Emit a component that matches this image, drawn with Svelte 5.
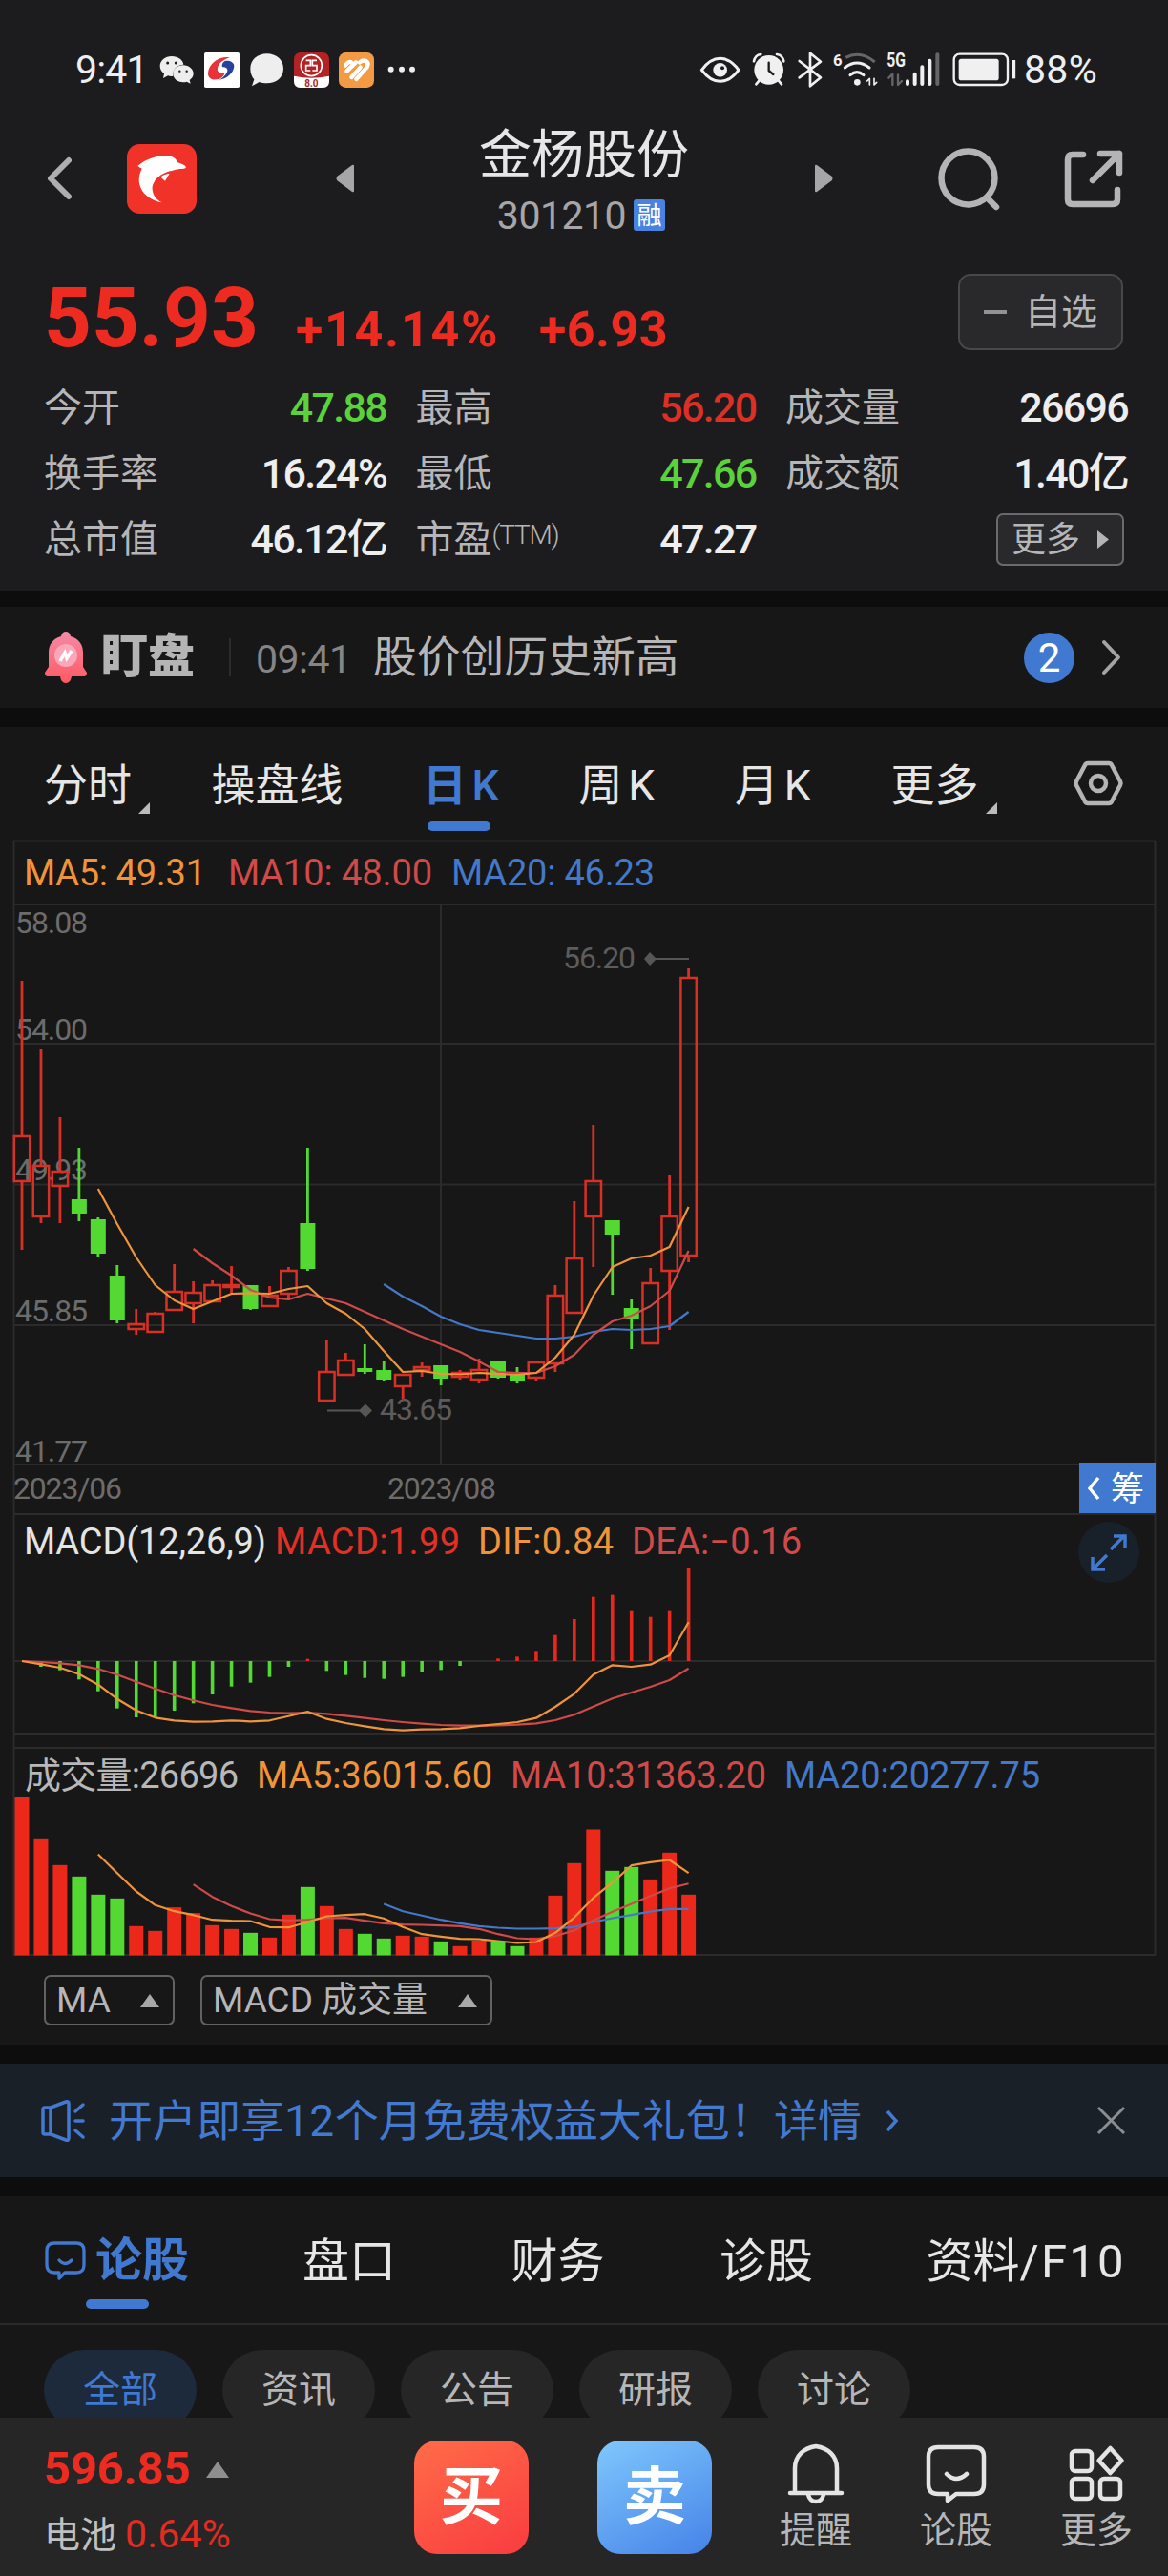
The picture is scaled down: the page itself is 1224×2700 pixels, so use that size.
<script lang="ts">
  const stats = [
    { label: '今开', value: '47.88', tone: 'down' },
    { label: '最高', value: '56.20', tone: 'up' },
    { label: '成交量', value: '26696', tone: '' },
    { label: '换手率', value: '16.24%', tone: '' },
    { label: '最低', value: '47.66', tone: 'down' },
    { label: '成交额', value: '1.40亿', tone: '' },
    { label: '总市值', value: '46.12亿', tone: '' },
    { label: '市盈', sup: '(TTM)', value: '47.27', tone: '' }
  ];

  const periods = [
    { name: '分时', corner: true },
    { name: '操盘线' },
    { name: '日', k: true, active: true },
    { name: '周', k: true },
    { name: '月', k: true },
    { name: '更多', corner: true }
  ];

  const pills = ['全部', '资讯', '公告', '研报', '讨论'];

  // [direction, high, body top, body bottom, low]
  const candles: [string, number, number, number, number][] = [
    ['r', 1028, 1190, 1239, 1310],
    ['r', 1099, 1221, 1276, 1282],
    ['r', 1171, 1227, 1244, 1282],
    ['g', 1203, 1257, 1272, 1280],
    ['g', 1276, 1278, 1314, 1318],
    ['g', 1326, 1337, 1384, 1387],
    ['r', 1372, 1387, 1394, 1399],
    ['r', 1375, 1376, 1397, 1397],
    ['r', 1325, 1353, 1374, 1374],
    ['r', 1343, 1354, 1367, 1387],
    ['r', 1342, 1346, 1365, 1365],
    ['r', 1327, 1346, 1350, 1355],
    ['g', 1347, 1347, 1372, 1373],
    ['r', 1348, 1357, 1370, 1370],
    ['r', 1328, 1331, 1357, 1360],
    ['g', 1203, 1282, 1330, 1332],
    ['r', 1405, 1437, 1469, 1469],
    ['r', 1418, 1425, 1442, 1442],
    ['g', 1409, 1434, 1438, 1440],
    ['g', 1426, 1436, 1446, 1447],
    ['r', 1440, 1440, 1454, 1466],
    ['r', 1428, 1432, 1437, 1443],
    ['g', 1431, 1431, 1445, 1452],
    ['r', 1436, 1438, 1444, 1446],
    ['r', 1424, 1435, 1447, 1450],
    ['g', 1427, 1427, 1444, 1445],
    ['g', 1433, 1441, 1447, 1450],
    ['r', 1427, 1427, 1445, 1447],
    ['r', 1347, 1357, 1430, 1438],
    ['r', 1259, 1318, 1377, 1377],
    ['r', 1179, 1237, 1276, 1328],
    ['g', 1279, 1279, 1294, 1357],
    ['g', 1362, 1371, 1383, 1414],
    ['r', 1329, 1344, 1409, 1409],
    ['r', 1232, 1274, 1333, 1394],
    ['r', 1015, 1024, 1317, 1323]
  ];

  const ma5 = [1246, 1283, 1318, 1347, 1363, 1372, 1364, 1356, 1355.5, 1356, 1351, 1348, 1366, 1377, 1393, 1416, 1438, 1437, 1440, 1440.5, 1439, 1440, 1441, 1439, 1423, 1399, 1358, 1328, 1319, 1316, 1307, 1265];
  const ma10 = [1309, 1324, 1337, 1352, 1360, 1362, 1356, 1361, 1366, 1375, 1384, 1393, 1401, 1409, 1417, 1427, 1438, 1439, 1439, 1432, 1420, 1399, 1385, 1379, 1369, 1353, 1311];
  const ma20 = [1346, 1359, 1369, 1380, 1388, 1394, 1397, 1400, 1403, 1403, 1401, 1396, 1393, 1394, 1393, 1390, 1375];

  const macd = [0, 18, 29, 58, 95, 149, 177, 177, 156, 133, 105, 80, 68, 50, 18, -7, 31, 44, 53, 56, 50, 36, 28, 15, 0, -8, -14, -32, -82, -132, -202, -208, -157, -139, -157, -293];
  const dif = [0, 10, 21, 41, 74, 119, 155, 178, 187, 191, 190, 187, 190, 187, 173, 159, 182, 195, 205, 214, 218, 215, 214, 211, 204, 198, 192, 179, 144, 103, 43, 13, 18, 11, -18, -122];
  const dea = [0, 3, 7, 13, 25, 43, 65, 87, 107, 124, 138, 148, 157, 162, 164, 162, 166, 172, 179, 186, 192, 197, 201, 203, 203, 202, 200, 196, 186, 169, 143, 118, 99, 81, 60, 23];

  const volumes: [string, number][] = [
    ['r', 497], ['r', 368], ['r', 284], ['g', 248], ['g', 191], ['g', 179], ['r', 92], ['r', 77], ['r', 151],
    ['r', 133], ['r', 95], ['r', 83], ['g', 71], ['r', 56], ['r', 128], ['g', 215], ['r', 155], ['r', 83],
    ['g', 68], ['g', 53], ['r', 62], ['r', 59], ['g', 44], ['r', 29], ['r', 47], ['g', 41], ['g', 29],
    ['r', 56], ['r', 188], ['r', 290], ['r', 396], ['g', 266], ['g', 278], ['r', 239], ['r', 323], ['r', 191]
  ];
  const vol5 = [318, 259, 201, 158, 139, 127, 112, 109, 108, 89, 88, 105, 123, 127, 130, 116, 89, 67, 59, 52, 51, 45, 39, 42, 71, 119, 181, 229, 283, 293, 300, 259];
  const vol10 = [223, 184, 155, 132, 114, 110, 112, 117, 118, 109, 101, 97, 96, 94, 92, 83, 67, 54, 51, 61, 79, 110, 137, 162, 187, 211, 226];
  const vol20 = [162, 139, 125, 112, 101, 92, 87, 84, 84, 85, 89, 105, 117, 127, 138, 146, 146];

  const cx = (i: number) => 23 + i * 19.96;

  function line(values: number[], start: number, y: (v: number) => number = (v) => v) {
    return values.map((v, i) => `${cx(i + start).toFixed(1)},${y(v).toFixed(1)}`).join(' ');
  }

  const macdY = (v: number) => 1741 + v / 3;
  const volY = (v: number) => 2049.5 - v / 3;
  const color = (d: string) => (d === 'r' ? '#d93026' : '#53d932');
</script>

<div class="page">
  <header>
    <div class="status">
      <span class="time">9:41</span>
      <div class="apps">
        <svg viewBox="385 42 111 111">
          <path fill="#eee" d="M424 54c-21 0-37 14-37 31 0 10 5 18 13 24l-3 14 15-8c6 2 11 2 16 1-3-20 13-36 33-36-2-15-17-26-37-26z" />
          <path fill="#eee" d="M460 82c-18 0-32 12-32 27s14 27 32 27c4 0 8-1 11-2l12 6-3-11c7-5 12-12 12-20 0-15-14-27-32-27z" />
          <g fill="#1c1c1e"><circle cx="411" cy="75" r="4.5" /><circle cx="437" cy="75" r="4.5" /><circle cx="449" cy="101" r="3.5" /><circle cx="471" cy="101" r="3.5" /></g>
        </svg>
        <svg viewBox="525 42 111 111">
          <rect x="525" y="42" width="111" height="111" rx="5" fill="#fff" />
          <path fill="#e8333a" d="M606 58c-34-5-68 19-69 50 0 14 12 22 27 19 15-2 24-12 25-20-14 2-24-4-22-15 2-15 18-28 39-34z" />
          <path fill="#26429a" d="M590 69c14-3 28 3 29 15 0 21-22 41-47 44 17-9 27-23 26-32-2-7-8-9-16-8-3-8 1-15 8-19z" />
        </svg>
        <svg viewBox="666 42 111 111">
          <path fill="#eee" d="M722 46c-29 0-52 19-52 47 0 15 5 26 12 34l-7 21 23-13c8 3 16 4 24 4 29 0 52-18 52-46s-23-47-52-47z" />
        </svg>
        <svg viewBox="807 42 111 111">
          <rect x="807" y="42" width="111" height="111" rx="20" fill="#b32224" />
          <path fill="#fff" d="M807 116q55 12 111 0v17q0 20-20 20h-71q-20 0-20-20z" />
          <circle cx="862" cy="83" r="33" fill="none" stroke="#fff" stroke-width="5" />
          <path fill="none" stroke="#fff" stroke-width="5" d="M845 67h14v16h-14v16h14M879 67h-14v16h14v16h-14" />
          <text x="862" y="149" text-anchor="middle" font-size="30" font-weight="700" fill="#b32224">8.0</text>
        </svg>
        <svg viewBox="948 42 111 111">
          <rect x="948" y="42" width="111" height="111" rx="22" fill="#f39a45" />
          <path fill="none" stroke="#fff" stroke-width="13" stroke-linecap="round" stroke-linejoin="round" d="M969 83l7-8q6-5 11-2M973 101l29-28M988 120l28-31M1003 126l34-38q7-13-4-19-9-4-19 4" />
        </svg>
        <svg viewBox="1092 42 111 111" fill="#eee"><circle cx="1115" cy="95" r="9" /><circle cx="1149" cy="95" r="9" /><circle cx="1182" cy="95" r="9" /></svg>
      </div>
      <svg class="system" viewBox="40 36 996 120" fill="none" stroke="#f0f0f0" stroke-linecap="round" stroke-linejoin="round">
        <path stroke-width="9" d="M47 97c18-24 36-36 58-36s40 12 58 36c-18 24-36 36-58 36s-40-12-58-36z" />
        <circle cx="105" cy="97" r="22" fill="#f0f0f0" stroke="none" />
        <circle cx="112" cy="91" r="6" fill="#1c1c1e" stroke="none" />
        <circle cx="258" cy="97" r="46" fill="#f0f0f0" stroke="none" />
        <path stroke-width="8" d="M211 70q4-20 22-22M305 70q-4-20-22-22M228 130l-10 12M288 130l10 12" />
        <path stroke="#1c1c1e" stroke-width="7" d="M258 74v25l14 12" />
        <path stroke-width="8" d="M354 69l67 52-33 27V44l33 27-67 50" />
        <text x="460" y="84" font-size="50" font-weight="700" fill="#f0f0f0" stroke="none">6</text>
        <path stroke="#666" stroke-width="9" d="M500 58q46-24 91 14" stroke-linecap="butt" />
        <path stroke-width="9" d="M497 90q38-30 77 0M514 113q21-18 42 0" />
        <circle cx="536" cy="136" r="10" fill="#f0f0f0" stroke="none" />
        <path stroke-width="5" d="M567 132l8-8v20M589 144v-20M589 144l8-8" />
        <text x="629" y="86" font-size="58" font-weight="700" fill="#f0f0f0" stroke="none" textLength="59" lengthAdjust="spacingAndGlyphs">5G</text>
        <path stroke="#666" stroke-width="7" d="M635 122l12-12v34M664 112v32l12-12" />
        <path stroke-width="12" d="M694 133v8M717 110v31M740 88v53M764 68v73" />
        <path stroke="#666" stroke-width="12" d="M788 49v92" />
        <rect x="840" y="47" width="169" height="97" rx="18" stroke-width="7" />
        <rect x="855" y="62" width="126" height="68" rx="8" fill="#f0f0f0" stroke="none" />
        <path stroke-width="11" stroke-linecap="butt" d="M1028 66v58" />
      </svg>
      <span class="battery">88%</span>
    </div>

    <nav>
      <svg class="back" viewBox="0 0 25 44"><path d="M22 3L3 22l19 19" fill="none" stroke="#aeaeb0" stroke-width="6" stroke-linecap="round" stroke-linejoin="round" /></svg>
      <svg class="logo" viewBox="0 0 219 219">
        <rect width="219" height="219" rx="40" fill="#f13229" />
        <path fill="#fff" d="M34 69C62 44 108 31 138 38c11 3 17 10 22 20 11 4 22 7 25 13 2 6-8 7-19 7-11 2-20 4-29 7-11 3-19 6-24 12l21-5-14 24-16-14c-18 12-26 26-24 42 2 17 12 31 30 40-24-4-50-18-62-38-14-24-12-47-1-69-4-3-9-4-13-8z" />
        <path stroke="#f13229" stroke-width="4" fill="none" d="M137 87q-33 8-48 30" />
      </svg>
      <svg class="step" viewBox="0 0 19 30"><path d="M19 2v26q0 2-2 1L1 17q-1-2 0-4L17 1q2-1 2 1z" fill="#a6a6a8" /></svg>
      <div class="name">
        <h1>金杨股份</h1>
        <p>301210<i>融</i></p>
      </div>
      <svg class="step next" viewBox="0 0 19 30"><path d="M0 2v26q0 2 2 1l16-12q1-2 0-4L2 1Q0 0 0 2z" fill="#a6a6a8" /></svg>
      <svg class="search" viewBox="0 0 65 65" fill="none" stroke="#b4b4b6" stroke-width="6.5" stroke-linecap="round"><circle cx="31.500" cy="31.500" r="28" /><path d="M52 53l9 9" /></svg>
      <svg class="share" viewBox="0 0 61 61" fill="none" stroke="#b4b4b6" stroke-width="6.5" stroke-linecap="round" stroke-linejoin="round"><path d="M20 5H9q-5 0-5 5v42q0 5 5 5h42q5 0 5-5V42M38 4h20v20M58 4L30 32" /></svg>
    </nav>

    <div class="quote">
      <div class="prices">
        <strong>55.93</strong>
        <b>+14.14%</b>
        <b class="diff">+6.93</b>
      </div>
      <button class="watch"><span></span>自选</button>
    </div>

    <div class="stats">
      {#each stats as s}
        <div class="stat">
          <span>{s.label}{#if s.sup}<small>{s.sup}</small>{/if}</span>
          <b class={s.tone}>{s.value}</b>
        </div>
      {/each}
      <div class="stat last">
        <button class="more">更多<svg viewBox="0 0 12 19"><path d="M0 0l12 9.500L0 19z" fill="#b4b4b6" /></svg></button>
      </div>
    </div>
  </header>

  <section class="alert">
    <svg class="bell" viewBox="0 0 44 54">
      <defs>
        <linearGradient id="bell" x1="0" y1="0" x2="0" y2="1"><stop offset="0" stop-color="#f58aa6" /><stop offset="1" stop-color="#ff5964" /></linearGradient>
      </defs>
      <path fill="url(#bell)" d="M22 0q4 0 5 5c8 2 13 8 13 17v15l4 6q0 4-3 4H28q-1 7-6 7t-6-7H3q-3 0-3-4l4-6V22C4 13 9 7 17 5q1-5 5-5z" />
      <circle cx="22" cy="25" r="12" fill="#f9a7b9" />
      <path d="M16 31l5-9 2 6 5-8" fill="none" stroke="#fff" stroke-width="3.500" />
    </svg>
    <strong>盯盘</strong>
    <i></i>
    <time>09:41</time>
    <p>股价创历史新高</p>
    <em>2</em>
    <svg class="go" viewBox="0 0 20 36"><path d="M2 2l15 16L2 34" fill="none" stroke="#a4a4a4" stroke-width="4" stroke-linecap="round" stroke-linejoin="round" /></svg>
  </section>

  <section class="chart">
    <div class="periods">
      {#each periods as p}
        <div class="period" class:active={p.active} class:corner={p.corner}>{p.name}{#if p.k}<span>K</span>{/if}</div>
      {/each}
      <svg class="gear" viewBox="0 0 52 48" fill="none" stroke="#b4b4b4" stroke-width="4.500" stroke-linejoin="round"><path d="M15 3h22q2 0 3 2l9 17q1 2 0 4l-9 17q-1 2-3 2H15q-2 0-3-2L3 26q-1-2 0-4l9-17q1-2 3-2z" /><circle cx="26" cy="24" r="8" /></svg>
    </div>

    <svg class="plot" viewBox="0 880 1224 1170">
      <g class="grid">
        <path d="M14 881.500H1211M14 948H1211M14 1094H1211M14 1241.500H1211M14 1389H1211M14 1535H1211M14 1587H1211M14 1741H1211M14 1817H1211M14 1832H1211M14 2049H1211M14.500 881V2049M1210.500 881V2049M462 948V1535" />
      </g>

      <g class="axis">
        <text x="16" y="978" textLength="76">58.08</text>
        <text x="16" y="1090" textLength="76">54.00</text>
        <text x="16" y="1237" textLength="76">49.93</text>
        <text x="16" y="1385" textLength="76">45.85</text>
        <text x="16" y="1532" textLength="76">41.77</text>
        <text x="14" y="1571" textLength="114">2023/06</text>
        <text x="406" y="1571" textLength="114">2023/08</text>
      </g>

      <g class="legend">
        <text x="25" y="928" textLength="191" fill="#f0943a">MA5: 49.31</text>
        <text x="239" y="928" textLength="214" fill="#cf4a48">MA10: 48.00</text>
        <text x="473" y="928" textLength="213" fill="#4478c8">MA20: 46.23</text>
        <text x="25" y="1629" textLength="254" fill="#e4e4e4">MACD(12,26,9)</text>
        <text x="288" y="1629" textLength="194" fill="#e23026">MACD:1.99</text>
        <text x="501" y="1629" textLength="142" fill="#f0943a">DIF:0.84</text>
        <text x="662" y="1629" textLength="178" fill="#cf4a48">DEA:−0.16</text>
        <text x="26" y="1874" textLength="224" fill="#b8b8b8">成交量:26696</text>
        <text x="269" y="1874" textLength="247" fill="#f0943a">MA5:36015.60</text>
        <text x="535" y="1874" textLength="268" fill="#cf4a48">MA10:31363.20</text>
        <text x="822" y="1874" textLength="268" fill="#4478c8">MA20:20277.75</text>
      </g>

      {#each candles as [d, high, top, bottom, low], i}
        <path d="M{cx(i)} {high}V{top}M{cx(i)} {bottom}V{low}" stroke={color(d)} stroke-width="2.800" />
        {#if d === 'r'}
          <rect x={cx(i) - 8.2} y={top + 1} width="16.400" height={bottom - top - 2} fill="none" stroke={color(d)} stroke-width="2.500" />
        {:else}
          <rect x={cx(i) - 8} y={top} width="16" height={bottom - top} fill={color(d)} />
        {/if}
      {/each}
      <g class="lines">
        <polyline points={line(ma20, 19)} stroke="#4478c8" />
        <polyline points={line(ma10, 9)} stroke="#cf4a48" />
        <polyline points={line(ma5, 4)} stroke="#f0943a" />
      </g>

      <g class="marks">
        <path d="M681 1005H722M343 1478.500H383" />
        <path d="M675 1005l6-7 7 7-7 7zM376 1478.500l7-7 7 7-7 7z" class="diamond" />
        <text x="590" y="1015" textLength="76">56.20</text>
        <text x="398" y="1488" textLength="76">43.65</text>
      </g>

      {#each macd as v, i}
        <path d="M{cx(i)} 1741V{macdY(v)}" stroke={v < 0 ? '#e8281c' : '#53d932'} stroke-width="3.600" />
      {/each}
      <g class="lines">
        <polyline points={line(dea, 0, macdY)} stroke="#cf4a48" />
        <polyline points={line(dif, 0, macdY)} stroke="#f0943a" />
      </g>

      {#each volumes as [d, v], i}
        <rect x={cx(i) - 7.5} y={volY(v)} width="15" height={v / 3} fill={d === 'r' ? '#ec281b' : '#53d932'} />
      {/each}
      <g class="lines">
        <polyline points={line(vol20, 19, volY)} stroke="#4478c8" />
        <polyline points={line(vol10, 9, volY)} stroke="#cf4a48" />
        <polyline points={line(vol5, 4, volY)} stroke="#f0943a" />
      </g>

      <rect x="1131" y="1533" width="80" height="53" fill="#4079cf" />
      <path d="M1151 1549l-9 11 9 11" fill="none" stroke="#fff" stroke-width="3.500" />
      <text x="1164" y="1573" font-size="35" fill="#fff">筹</text>

      <circle cx="1162" cy="1627" r="32" fill="#18202a" />
      <path d="M1164 1624l15-15M1167 1610h12v13M1160 1630l-15 15M1145 1632v13h13" fill="none" stroke="#4079cf" stroke-width="3.500" />
    </svg>

    <div class="indicators">
      <button>MA<svg viewBox="0 0 20 14"><path d="M10 0l10 14H0z" /></svg></button>
      <button class="wide">MACD 成交量<svg viewBox="0 0 20 14"><path d="M10 0l10 14H0z" /></svg></button>
    </div>
  </section>

  <section class="banner">
    <svg class="horn" viewBox="0 0 46 44" fill="none" stroke="#4479d0" stroke-width="3.500" stroke-linecap="round" stroke-linejoin="round"><path d="M10 8H4q-2 0-2 2v24q0 2 2 2h6M10 8v28M10 8l16-6q3-1 3 2v36q0 3-3 2l-16-6M36 12l8-7M36 22h8M36 32l8 7" /></svg>
    <p>开户即享<span>12</span>个月免费权益大礼包！</p>
    <a href="#detail">详情</a>
    <svg class="arrow" viewBox="0 0 14 24"><path d="M2 2l9 10-9 10" fill="none" stroke="#4479d0" stroke-width="3.500" /></svg>
    <svg class="close" viewBox="0 0 31 31"><path d="M2 2l27 27M29 2L2 29" fill="none" stroke="#8b8d90" stroke-width="3" /></svg>
  </section>

  <section class="tabs">
    <div class="tab active">
      <svg viewBox="0 0 43 41" fill="none" stroke="#4079cf" stroke-width="3.300" stroke-linejoin="round" stroke-linecap="round"><path d="M10 2h23q8 0 8 8v15q0 8-8 8H21l-6 6v-6h-5q-8 0-8-8V10q0-8 8-8zM15 20q6 7 13 0" /></svg>论股
    </div>
    <div class="tab">盘口</div>
    <div class="tab">财务</div>
    <div class="tab">诊股</div>
    <div class="tab info">资料<span>/F10</span></div>
  </section>

  <div class="pills">
    {#each pills as pill, i}
      <span class:on={i === 0}>{pill}</span>
    {/each}
  </div>

  <footer>
    <div class="index">
      <strong>596.85<svg viewBox="0 0 24 17"><path d="M12 0l12 17H0z" fill="#8f8f8f" /></svg></strong>
      <p>电池<span>0.64%</span></p>
    </div>
    <button class="buy">买</button>
    <button class="sell">卖</button>
    <div class="tool">
      <svg viewBox="0 0 60 64" fill="none" stroke="#e4e4e4" stroke-width="4.500" stroke-linecap="round" stroke-linejoin="round"><path d="M3 53h54M8 53V27C8 14 17 6 30 4c13 2 22 10 22 23v26M22 55q2 7 8 7t8-7" /></svg>
      提醒
    </div>
    <div class="tool">
      <svg viewBox="0 0 64 64" fill="none" stroke="#e4e4e4" stroke-width="4.500" stroke-linecap="round" stroke-linejoin="round"><path d="M13 5h38q10 0 10 10v29q0 10-10 10H32l-9 7v-7H13Q3 54 3 44V15Q3 5 13 5zM22 33q10 10 21 0" /></svg>
      论股
    </div>
    <div class="tool">
      <svg viewBox="0 0 60 64" fill="none" stroke="#e4e4e4" stroke-width="4.500" stroke-linejoin="round"><rect x="4" y="9" width="21" height="21" rx="4" /><rect x="4" y="38" width="21" height="21" rx="4" /><rect x="34" y="38" width="21" height="21" rx="4" /><path d="M44.500 6l12 13-12 13-12-13z" /></svg>
      更多
    </div>
  </footer>
</div>

<style>
  :global(body) {
    background: #0d0d0d;
  }
  .page {
    width: 1224px;
    height: 2700px;
    overflow: hidden;
    background: #0d0d0d;
    color: #b6b6b8;
    font-family: Roboto, 'Noto Sans CJK SC', sans-serif;
  }
  h1, p {
    margin: 0;
    font-weight: 400;
  }
  i, em {
    font-style: normal;
  }
  button {
    font-family: inherit;
    padding: 0;
    color: #b6b6b8;
  }
  svg {
    display: block;
    flex: none;
    overflow: visible;
  }
  header {
    height: 619px;
    background: #1c1c1e;
  }
  .status {
    display: flex;
    align-items: center;
    height: 110px;
    padding: 36px 0 0 79px;
    box-sizing: border-box;
    line-height: 74px;
    color: #eee;
  }
  .time {
    width: 88px;
    font-size: 41px;
    letter-spacing: -0.8px;
  }
  .apps {
    display: flex;
    gap: 10px;
  }
  .apps svg {
    width: 37px;
    height: 37px;
  }
  .system {
    width: 332px;
    height: 40px;
    margin-left: 294px;
  }
  .battery {
    margin-left: 8px;
    font-size: 41px;
    letter-spacing: 0.3px;
  }
  nav {
    display: flex;
    align-items: center;
    height: 154px;
  }
  .back {
    width: 25px;
    height: 44px;
    margin-left: 50px;
  }
  .logo {
    width: 73px;
    height: 73px;
    margin-left: 58px;
  }
  .step {
    width: 19px;
    height: 30px;
    margin-left: 146px;
  }
  .step.next {
    margin-left: 132px;
  }
  .name {
    width: 220px;
    margin-left: 131px;
    padding-top: 3px;
    text-align: center;
  }
  h1 {
    font-size: 55px;
    line-height: 60px;
    color: #e6e6e6;
    white-space: nowrap;
  }
  .name p {
    display: flex;
    justify-content: center;
    align-items: center;
    gap: 8px;
    margin-top: 14px;
    margin-right: 6px;
    font-size: 41px;
    line-height: 40px;
    letter-spacing: -0.5px;
    color: #a6a6a8;
  }
  .name i {
    width: 33px;
    height: 33px;
    border-radius: 3px;
    background: #4a82e0;
    color: #fff;
    font-size: 26px;
    line-height: 34px;
    letter-spacing: 0;
  }
  .search {
    width: 65px;
    height: 65px;
    margin-left: 110px;
  }
  .share {
    width: 61px;
    height: 61px;
    margin-left: 67px;
  }
  .quote {
    display: flex;
    justify-content: space-between;
    align-items: center;
    height: 80px;
    margin: 23px 47px 0 46px;
  }
  .prices {
    display: flex;
    align-items: baseline;
    padding-top: 12px;
    color: #ee2b20;
  }
  .prices strong {
    width: 264px;
    font-size: 87px;
    line-height: 90px;
    letter-spacing: 0;
  }
  .prices b {
    width: 255px;
    font-size: 52px;
    letter-spacing: 1.7px;
  }
  .prices .diff {
    width: auto;
    letter-spacing: 0.4px;
  }
  .watch {
    display: flex;
    align-items: center;
    justify-content: center;
    gap: 19px;
    width: 173px;
    height: 80px;
    border: 2px solid #48484a;
    border-radius: 13px;
    background: #29292b;
    font-size: 38px;
    line-height: 74px;
  }
  .watch span {
    width: 24px;
    height: 4px;
    background: #929294;
  }
  .stats {
    display: grid;
    grid-template-columns: 359px 357px 359px;
    column-gap: 30.500px;
    margin: 26px 0 0 46px;
  }
  .stat {
    display: flex;
    justify-content: space-between;
    height: 69px;
    font-size: 40px;
    line-height: 69px;
  }
  .stat small {
    font-size: 28px;
    font-weight: 300;
    vertical-align: 9px;
    line-height: 30px;
    letter-spacing: -1.2px;
  }
  .stat b {
    font-size: 43px;
    font-weight: 500;
    letter-spacing: -1.7px;
    color: #eee;
  }
  .stat .up {
    color: #dc3027;
  }
  .stat .down {
    color: #5bd23c;
  }
  .stat.last {
    justify-content: flex-end;
    align-items: center;
    padding-right: 4px;
  }
  .more {
    display: flex;
    align-items: center;
    justify-content: center;
    gap: 18px;
    width: 134px;
    height: 55px;
    border: 2px solid #6a6a6c;
    border-radius: 7px;
    background: #29292b;
    font-size: 36px;
    line-height: 50px;
  }
  .more svg {
    width: 12px;
    height: 19px;
  }
  .alert {
    display: flex;
    align-items: center;
    height: 106px;
    margin-top: 17px;
    background: #171717;
    line-height: 60px;
  }
  .bell {
    width: 44px;
    height: 54px;
    margin-left: 47px;
  }
  .alert strong {
    width: 98px;
    margin-left: 15px;
    font-size: 49px;
    font-weight: 900;
    color: #b4b4b4;
  }
  .alert i {
    width: 2px;
    height: 40px;
    margin-left: 36px;
    background: #2c2c2c;
  }
  time {
    width: 96px;
    margin: 4px 0 0 26px;
    font-size: 41px;
    letter-spacing: -0.5px;
    color: #858585;
  }
  .alert p {
    margin-left: 27px;
    font-size: 45.800px;
    padding-top: 2px;
  }
  .alert em {
    width: 53px;
    height: 53px;
    margin-left: auto;
    border-radius: 50%;
    background: #4079cf;
    color: #fff;
    font-size: 42px;
    line-height: 54px;
    text-align: center;
  }
  .go {
    width: 20px;
    height: 36px;
    margin: 0 49px 0 29px;
  }
  .chart {
    height: 1381px;
    margin-top: 20px;
    background: #171717;
  }
  .periods {
    display: flex;
    gap: 83.500px;
    height: 118px;
    padding-left: 46px;
    font-size: 46px;
    line-height: 122px;
    color: #e6e6e6;
  }
  .period {
    position: relative;
    white-space: nowrap;
  }
  .period span {
    display: inline-block;
    width: 34px;
    text-align: right;
    font-size: 45px;
  }
  .period.active {
    color: #4079cf;
    font-weight: 700;
  }
  .period.active span {
    font-weight: 500;
  }
  .period.active::after {
    content: '';
    position: absolute;
    left: 5px;
    bottom: 9px;
    width: 66px;
    height: 10px;
    border-radius: 5px;
    background: #4079cf;
  }
  .period.corner::after {
    content: '';
    position: absolute;
    right: -19px;
    bottom: 27px;
    border: 6.500px solid;
    border-color: transparent #bbb #bbb transparent;
  }
  .gear {
    width: 52px;
    height: 48px;
    margin: 35px 0 0 16px;
  }
  .plot {
    width: 1224px;
    height: 1170px;
  }
  .grid path {
    stroke: #2b2b2b;
    stroke-width: 2;
  }
  .axis text, .marks text {
    font-size: 32px;
    fill: #6c6c6c;
  }
  .marks text {
    fill: #5c5c5c;
  }
  .marks path {
    stroke: #565656;
    stroke-width: 2;
  }
  .marks .diamond {
    fill: #565656;
    stroke: none;
  }
  .legend text {
    font-size: 38px;
    white-space: pre;
  }
  .lines polyline {
    fill: none;
    stroke-width: 2.200;
    stroke-linejoin: round;
  }
  .indicators {
    display: flex;
    gap: 27px;
    padding: 20px 0 0 46px;
  }
  .indicators button {
    display: flex;
    align-items: center;
    justify-content: space-between;
    width: 137px;
    height: 53px;
    padding: 0 14px 0 11px;
    border: 2px solid #626262;
    border-radius: 7px;
    background: none;
    font-size: 37px;
    line-height: 49px;
    white-space: nowrap;
  }
  .indicators .wide {
    width: 306px;
  }
  .indicators svg {
    width: 20px;
    height: 14px;
    fill: #a8a8a8;
  }
  .banner {
    display: flex;
    align-items: center;
    height: 119px;
    margin-top: 20px;
    background: #1a2028;
    color: #4479d0;
    font-size: 46px;
    line-height: 60px;
  }
  .horn {
    width: 46px;
    height: 44px;
    margin-left: 43px;
  }
  .banner p {
    width: 697px;
    margin-left: 25px;
    white-space: nowrap;
    overflow: hidden;
  }
  .banner p span {
    letter-spacing: 0.5px;
  }
  .banner a {
    color: inherit;
    text-decoration: none;
  }
  .arrow {
    width: 14px;
    height: 24px;
    margin-left: 25px;
  }
  .close {
    width: 31px;
    height: 31px;
    margin: 0 44px 0 auto;
  }
  .tabs {
    display: flex;
    height: 135px;
    margin-top: 20px;
    padding-left: 47px;
    box-sizing: border-box;
    border-bottom: 2px solid #2a2a2a;
    background: #171717;
    color: #e6e6e6;
    font-size: 49px;
    line-height: 138px;
    white-space: nowrap;
  }
  .tab {
    width: 218.500px;
  }
  .tab.active {
    position: relative;
    display: flex;
    align-items: center;
    gap: 10px;
    width: 270px;
    height: 135px;
    color: #4079cf;
    font-weight: 700;
  }
  .tab.active svg {
    width: 43px;
    height: 41px;
  }
  .tab.active::after {
    content: '';
    position: absolute;
    left: 43px;
    bottom: 17px;
    width: 66px;
    height: 10px;
    border-radius: 5px;
    background: #4079cf;
  }
  .tab.info {
    margin-left: -2px;
  }
  .tab.info span {
    letter-spacing: 2.200px;
  }
  .pills {
    display: flex;
    gap: 27px;
    height: 97px;
    padding: 26px 0 0 46px;
    box-sizing: border-box;
    overflow: hidden;
    background: #171717;
  }
  .pills span {
    width: 160px;
    height: 84px;
    border-radius: 42px;
    background: #262626;
    font-size: 39px;
    line-height: 84px;
    text-align: center;
  }
  .pills .on {
    background: #1c2a3c;
    color: #4079cf;
  }
  footer {
    display: flex;
    height: 166px;
    background: #262626;
  }
  .index {
    width: 434px;
    padding: 30px 0 0 46px;
    box-sizing: border-box;
  }
  .index strong {
    display: flex;
    align-items: center;
    gap: 16px;
    font-size: 49px;
    line-height: 48px;
    letter-spacing: -0.2px;
    color: #ee2b20;
  }
  .index svg {
    width: 24px;
    height: 17px;
  }
  .index p {
    margin-top: 20px;
    font-size: 38px;
    line-height: 48px;
    color: #c0c0c0;
  }
  .index p span {
    margin-left: 9px;
    font-size: 41px;
    letter-spacing: 0.2px;
    color: #e22c22;
  }
  .buy, .sell {
    width: 120px;
    height: 119px;
    margin-top: 24px;
    border: 0;
    border-radius: 24px;
    background: linear-gradient(150deg, #ff6c48, #f93c40);
    color: #fff;
    font-size: 66px;
    font-weight: 700;
    line-height: 119px;
  }
  .sell {
    margin-left: 72px;
    background: linear-gradient(150deg, #7fc8fd, #4682e8);
  }
  .tool {
    display: flex;
    flex-direction: column;
    align-items: center;
    gap: 5px;
    width: 76px;
    padding-top: 26px;
    font-size: 38px;
    line-height: 46px;
    margin-left: 71px;
    white-space: nowrap;
  }
  .tool svg {
    height: 64px;
  }
</style>
